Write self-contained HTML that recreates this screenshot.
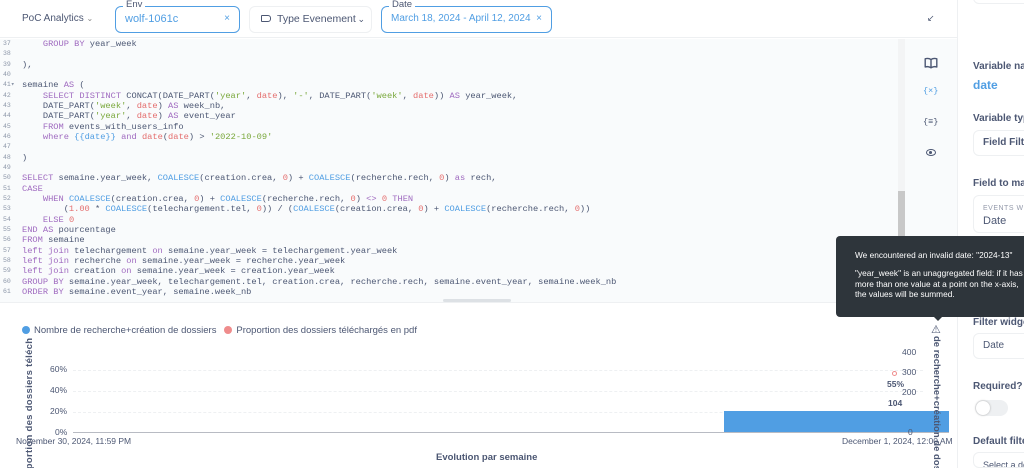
<!DOCTYPE html>
<html><head><meta charset="utf-8"><style>
*{box-sizing:border-box;margin:0;padding:0}
html,body{width:1024px;height:468px;overflow:hidden}
body{background:#fff;font-family:"Liberation Sans",sans-serif;color:#4c5773;position:relative;white-space:nowrap}
.top{position:absolute;left:0;top:0;width:957px;height:38px;background:#fff;border-bottom:1px solid #eef0f2}
.fld{position:absolute;top:6px;height:27px;border:1.5px solid #509ee3;border-radius:6px;font-size:11px;color:#509ee3;line-height:24px;padding-left:9px}
.lab{position:absolute;top:-8px;left:7px;background:#fff;padding:0 3px;font-size:9.5px;color:#4c5773;line-height:12px}
.x{position:absolute;right:9px;top:0;font-size:10px}
.ed{position:absolute;left:0;top:39px;width:957px;height:264px;background:#f9fbfc;border-bottom:1px solid #eef0f2;overflow:hidden}
.code{position:absolute;left:0;top:0;font-family:"Liberation Mono",monospace;font-size:8.7px;color:#4c5773}
.code div{height:10.33px;line-height:10.33px;white-space:pre;overflow:visible}
.ln{display:inline-block;width:22px;color:#8c96a8;font-size:6.5px;padding-left:3px;line-height:10.33px;height:10.33px;vertical-align:top}
.k{color:#a06bc0}.s{color:#7aa83c}.r{color:#e46e6e}.f{color:#509ee3}
.rp{position:absolute;left:957px;top:0;width:67px;height:468px;background:#fff;border-left:1px solid #eef0f2;font-size:10px;overflow:hidden}
.rp div{position:absolute}
.box{border:1px solid #eef0f2;border-radius:6px;left:15px;width:70px;height:26px;padding-left:9px;line-height:24px;font-weight:bold;color:#4c5773;font-size:10px;overflow:hidden}
.tip{position:absolute;left:836px;top:236px;width:188px;height:81px;background:#2e353b;border-radius:4px 0 0 4px;color:#fff;font-size:8.3px;padding:14px 0 0 19px;line-height:11px;overflow:hidden}
.ch{position:absolute;font-size:8.5px;color:#4c5773}
.dot{display:inline-block;width:8px;height:8px;border-radius:50%;vertical-align:-1px;margin-right:4px}
</style></head><body>
<div class="top">
 <div style="position:absolute;left:22px;top:13px;font-size:10px;color:#4c5773">PoC Analytics <span style="font-size:8px;color:#888">&#8964;</span></div>
 <div class="fld" style="left:115px;width:125px"><span class="lab">Env</span>wolf-1061c<span class="x">×</span></div>
 <div class="fld" style="left:249px;width:123px;border:1.5px solid #eef0f2;color:#4c5773;padding-left:11px;font-size:10.5px"><span style="display:inline-block;width:10px;height:7px;border:1.2px solid #4c5773;border-radius:1px 3px 3px 1px;margin-right:6px"></span>Type Evenement<span class="x" style="font-size:9px;right:6px">&#8964;</span></div>
 <div class="fld" style="left:381px;width:171px;font-size:10px"><span class="lab">Date</span>March 18, 2024 - April 12, 2024<span class="x">×</span></div>
 <div style="position:absolute;left:927px;top:13px;font-size:9px;color:#4c5773">&#8601;</div>
</div>
<div class="ed">
<div class="code">
<div><span class="ln">37</span>    <span class="k">GROUP BY</span> year_week</div>
<div><span class="ln">38</span></div>
<div><span class="ln">39</span>),</div>
<div><span class="ln">40</span></div>
<div><span class="ln">41▾</span>semaine <span class="k">AS</span> (</div>
<div><span class="ln">42</span>    <span class="k">SELECT DISTINCT</span> CONCAT(DATE_PART(<span class="s">'year'</span>, <span class="r">date</span>), <span class="s">'-'</span>, DATE_PART(<span class="s">'week'</span>, <span class="r">date</span>)) <span class="k">AS</span> year_week,</div>
<div><span class="ln">43</span>    DATE_PART(<span class="s">'week'</span>, <span class="r">date</span>) <span class="k">AS</span> week_nb,</div>
<div><span class="ln">44</span>    DATE_PART(<span class="s">'year'</span>, <span class="r">date</span>) <span class="k">AS</span> event_year</div>
<div><span class="ln">45</span>    <span class="k">FROM</span> events_with_users_info</div>
<div><span class="ln">46</span>    <span class="k">where</span> <span class="f">{{date}}</span> <span class="k">and</span> <span class="r">date</span>(<span class="r">date</span>) &gt; <span class="s">'2022-10-09'</span></div>
<div><span class="ln">47</span></div>
<div><span class="ln">48</span>)</div>
<div><span class="ln">49</span></div>
<div><span class="ln">50</span><span class="k">SELECT</span> semaine.year_week, <span class="f">COALESCE</span>(creation.crea, <span class="r">0</span>) + <span class="f">COALESCE</span>(recherche.rech, <span class="r">0</span>) <span class="k">as</span> rech,</div>
<div><span class="ln">51</span><span class="k">CASE</span></div>
<div><span class="ln">52</span>    <span class="k">WHEN</span> <span class="f">COALESCE</span>(creation.crea, <span class="r">0</span>) + <span class="f">COALESCE</span>(recherche.rech, <span class="r">0</span>) <span class="k">&lt;&gt;</span> <span class="r">0</span> <span class="k">THEN</span></div>
<div><span class="ln">53</span>        (<span class="r">1.00</span> * <span class="f">COALESCE</span>(telechargement.tel, <span class="r">0</span>)) / (<span class="f">COALESCE</span>(creation.crea, <span class="r">0</span>) + <span class="f">COALESCE</span>(recherche.rech, <span class="r">0</span>))</div>
<div><span class="ln">54</span>    <span class="k">ELSE</span> <span class="r">0</span></div>
<div><span class="ln">55</span><span class="k">END AS</span> pourcentage</div>
<div><span class="ln">56</span><span class="k">FROM</span> semaine</div>
<div><span class="ln">57</span><span class="k">left join</span> telechargement <span class="k">on</span> semaine.year_week = telechargement.year_week</div>
<div><span class="ln">58</span><span class="k">left join</span> recherche <span class="k">on</span> semaine.year_week = recherche.year_week</div>
<div><span class="ln">59</span><span class="k">left join</span> creation <span class="k">on</span> semaine.year_week = creation.year_week</div>
<div><span class="ln">60</span><span class="k">GROUP BY</span> semaine.year_week, telechargement.tel, creation.crea, recherche.rech, semaine.event_year, semaine.week_nb</div>
<div><span class="ln">61</span><span class="k">ORDER BY</span> semaine.event_year, semaine.week_nb</div>
</div>
 <div style="position:absolute;left:898px;top:0;width:7px;height:264px;background:#f3f4f5"></div>
 <div style="position:absolute;left:898px;top:152px;width:7px;height:45px;background:#c8c8c8"></div>
 <div style="position:absolute;left:443px;top:260px;width:68px;height:3px;border-radius:2px;background:#dde1e5"></div>
 <svg style="position:absolute;left:924px;top:18px" width="14" height="12" viewBox="0 0 14 12"><path d="M7 2.5C5.5 1.5 3 1.2 1.2 1.8V10C3 9.4 5.5 9.8 7 10.8C8.5 9.8 11 9.4 12.8 10V1.8C11 1.2 8.5 1.5 7 2.5ZM7 2.5V10.8" fill="none" stroke="#4c5773" stroke-width="1.4" stroke-linejoin="round"/></svg>
 <div style="position:absolute;left:923px;top:47px;font-size:8.5px;color:#509ee3;font-family:'Liberation Mono',monospace">{×}</div>
 <div style="position:absolute;left:923px;top:78px;font-size:8.5px;color:#4c5773;font-family:'Liberation Mono',monospace">{≡}</div>
 <div style="position:absolute;left:926px;top:110px;width:10px;height:7px;border:1.5px solid #4c5773;border-radius:50%"><div style="position:absolute;left:2px;top:1px;width:3px;height:2.5px;background:#4c5773;border-radius:50%"></div></div>
</div>
<!-- chart -->
<div class="ch" style="left:22px;top:325px;font-size:9.5px"><span class="dot" style="background:#509ee3"></span>Nombre de recherche+création de dossiers &nbsp;&nbsp;<span class="dot" style="background:#ef8c8c"></span>Proportion des dossiers téléchargés en pdf</div>
<div class="ch" style="left:22px;top:338px;width:14px;height:130px;overflow:hidden"><div style="transform:rotate(-90deg);transform-origin:0 0;position:absolute;top:148px;left:2px;white-space:nowrap;font-size:9.5px;font-weight:bold;letter-spacing:.3px">Proportion des dossiers téléchargés en pdf</div></div>
<div class="ch" style="left:50px;top:364px">60%</div>
<div class="ch" style="left:50px;top:385px">40%</div>
<div class="ch" style="left:50px;top:406px">20%</div>
<div class="ch" style="left:55px;top:427px">0%</div>
<div style="position:absolute;left:73px;top:370px;width:850px;border-top:1px dashed #eef0f2"></div>
<div style="position:absolute;left:73px;top:391px;width:850px;border-top:1px dashed #eef0f2"></div>
<div style="position:absolute;left:73px;top:412px;width:850px;border-top:1px dashed #eef0f2"></div>
<div style="position:absolute;left:73px;top:432px;width:876px;border-top:1px solid #b8bbc3"></div>
<div style="position:absolute;left:724px;top:411px;width:225px;height:21px;background:#509ee3"></div>
<div class="ch" style="left:16px;top:436px">November 30, 2024, 11:59 PM</div>
<div class="ch" style="left:842px;top:436px">December 1, 2024, 12:00 AM</div>
<div class="ch" style="left:436px;top:452px;font-size:9.5px;font-weight:bold">Evolution par semaine</div>
<div class="ch" style="left:902px;top:347px">400</div>
<div class="ch" style="left:902px;top:367px">300</div>
<div class="ch" style="left:902px;top:387px">200</div>
<div class="ch" style="left:908px;top:427px">0</div>
<div style="position:absolute;left:892px;top:371px;width:5px;height:5px;border:1.2px solid #ef8c8c;border-radius:50%"></div>
<div class="ch" style="left:887px;top:379px;font-weight:bold">55%</div>
<div class="ch" style="left:888px;top:398px;font-weight:bold">104</div>
<div class="ch" style="left:931px;top:330px;width:12px;height:138px;overflow:hidden"><div style="transform:rotate(90deg);transform-origin:0 0;position:absolute;left:11px;top:6px;white-space:nowrap;font-size:9.5px;font-weight:bold">de recherche+création de dossiers</div></div>
<div style="position:absolute;left:931px;top:323px;font-size:11px;color:#4c5773">⚠</div>
<div class="rp">
 <div style="left:15px;top:-10px;width:70px;height:14px;border:1px solid #eef0f2;border-radius:6px"></div>
 <div style="left:15px;top:61px;font-weight:bold;font-size:10px">Variable name</div>
 <div style="left:15px;top:78px;font-weight:bold;font-size:12px;color:#509ee3">date</div>
 <div style="left:15px;top:113px;font-weight:bold">Variable type</div>
 <div class="box" style="top:130px">Field Filter</div>
 <div style="left:15px;top:178px;font-weight:bold">Field to map to</div>
 <div class="box" style="top:195px;height:38px;line-height:13px;padding-top:5px"><span style="font-size:7px;color:#949aab;letter-spacing:.5px;font-weight:normal">EVENTS WITH</span><br><span style="font-size:11px;font-weight:normal">Date</span></div>
 <div style="left:15px;top:317px;font-weight:bold">Filter widget type</div>
 <div class="box" style="top:333px;font-weight:normal">Date</div>
 <div style="left:15px;top:381px;font-weight:bold">Required?</div>
 <div style="left:17px;top:400px;width:33px;height:16px;border-radius:8px;background:#eef0f2"><div style="position:absolute;left:1px;top:1px;width:14px;height:14px;border-radius:50%;background:#fff;box-shadow:0 0 2px #aaa"></div></div>
 <div style="left:15px;top:436px;font-weight:bold">Default filter widget</div>
 <div class="box" style="top:452px;height:16px;font-weight:normal;font-size:9px">Select a default</div>
</div>
<div class="tip">We encountered an invalid date: "2024-13"<div style="margin-top:7px;line-height:10.5px">"year_week" is an unaggregated field: if it has<br>more than one value at a point on the x-axis,<br>the values will be summed.</div></div>
<div style="position:absolute;left:934px;top:317px;border:4px solid transparent;border-top-color:#2e353b"></div>
</body></html>
